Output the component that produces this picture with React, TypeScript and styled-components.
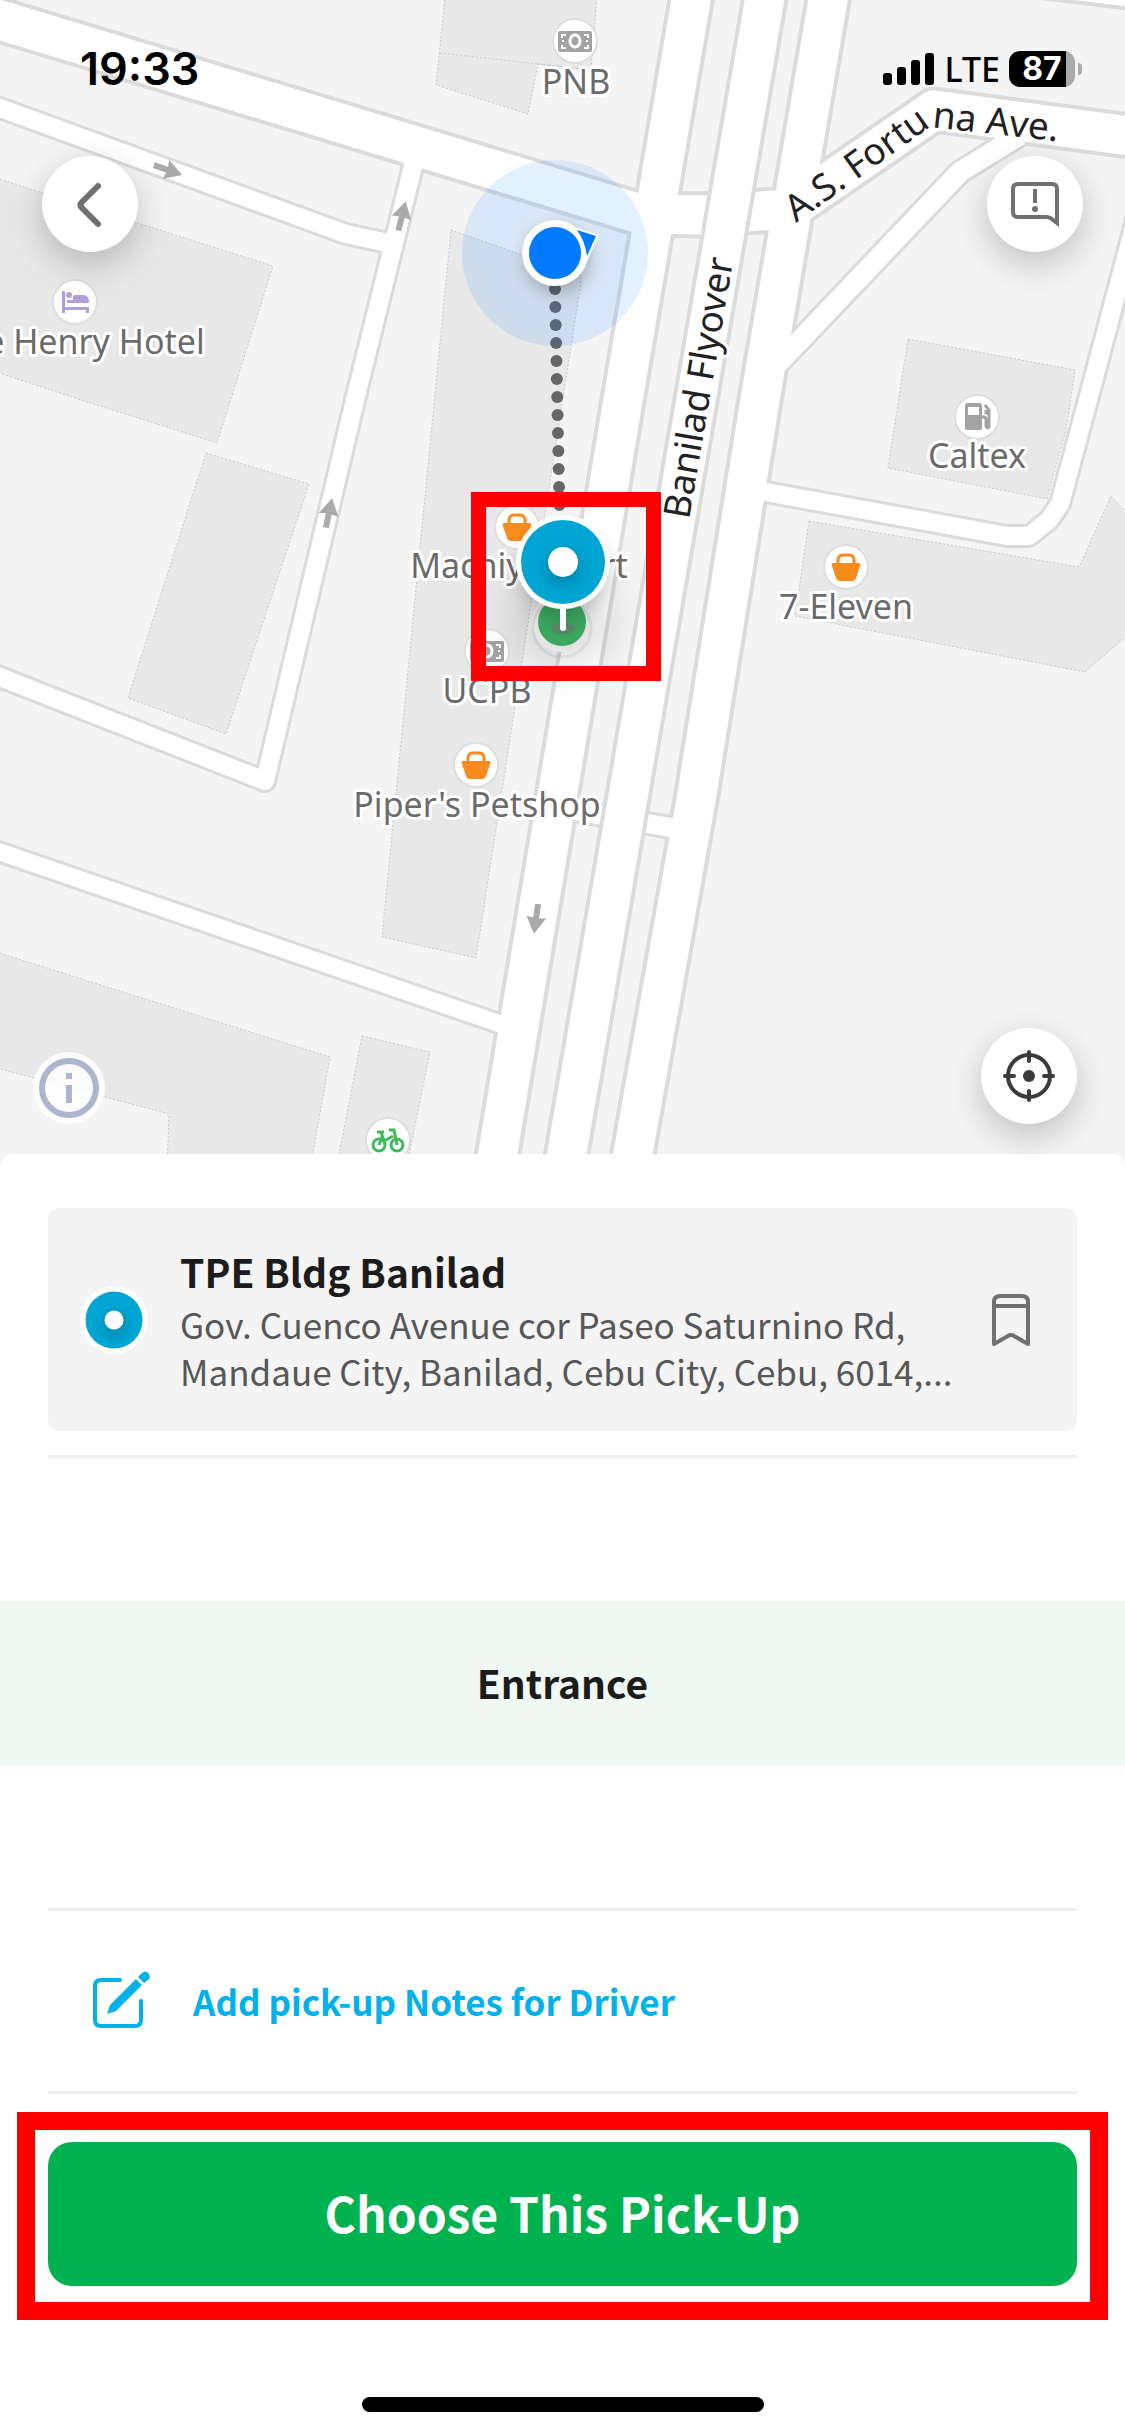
import React from 'react';
import styled, { createGlobalStyle } from 'styled-components';

const GlobalStyle = createGlobalStyle`
  *, *::before, *::after { box-sizing: border-box; }

  body {
    margin: 0;
    background: #fff;
    font-family: 'Noto Sans CJK SC', 'Noto Sans', sans-serif;
    color: #1c1c1c;
  }
`;

const Screen = styled.main`
  position: relative;
  width: 100%;
  min-height: 100vh;
  display: flex;
  flex-direction: column;
`;

const MapArea = styled.section`
  position: relative;
  height: 1168px;
  overflow: hidden;
  background: #f4f4f4;
`;

const MapSvg = styled.svg`
  display: block;
  width: 100%;
  height: 1168px;
`;

const MapOverlay = styled.div`
  position: absolute;
  inset: 0;
  display: flex;
  flex-direction: column;
  justify-content: space-between;
`;

const StatusBar = styled.header`
  display: flex;
  align-items: center;
  justify-content: space-between;
  height: 138px;
  padding: 0 43px 0 80px;
`;

const Clock = styled.time`
  font-family: Inter, 'Liberation Sans', sans-serif;
  font-size: 45px;
  font-weight: 600;
  line-height: 48px;
  color: #000;
`;

const StatusIcons = styled.div`
  display: flex;
  align-items: center;
  gap: 9px;
`;

const Network = styled.span`
  font-family: 'Noto Sans', sans-serif;
  font-size: 34px;
  font-weight: 500;
  line-height: 36px;
  color: #000;
`;

const ControlRow = styled.div`
  display: flex;
  align-items: flex-end;
  justify-content: space-between;
`;

const TopControls = styled(ControlRow)`
  padding: 18px 42px;
  margin-bottom: auto;
`;

const BottomControls = styled(ControlRow)`
  padding: 0 48px 44px 33px;
`;

const RoundButton = styled.button`
  display: flex;
  align-items: center;
  justify-content: center;
  width: 96px;
  height: 96px;
  padding: 0;
  border: 0;
  border-radius: 50%;
  background: #fff;
  box-shadow: 0 12px 36px rgba(0, 0, 0, 0.22);
`;

const InfoButton = styled(RoundButton)`
  width: 72px;
  height: 72px;
  background: rgba(255, 255, 255, 0.8);
  box-shadow: none;
`;

const PinHighlight = styled.div`
  position: absolute;
  left: 471px;
  top: 492px;
  width: 190px;
  height: 189px;
  border: 15px solid #f00;
`;

const Sheet = styled.section`
  position: relative;
  display: flex;
  flex-direction: column;
  margin-top: -14px;
  padding-top: 54px;
  border-radius: 14px 14px 0 0;
  background: #fff;
`;

const PlaceCard = styled.article`
  display: flex;
  align-items: center;
  margin: 0 48px;
  padding: 36px 47px 36px 32px;
  border-radius: 12px;
  background: #f4f4f4;
`;

const PlaceText = styled.div`
  flex: 1;
  min-width: 0;
  margin: -1px 0 1px 32px;
`;

const PlaceName = styled.h1`
  margin: 0;
  font-size: 39px;
  font-weight: 700;
  line-height: 57px;
`;

const PlaceAddress = styled.p`
  margin: 0;
  font-size: 35px;
  line-height: 47px;
  color: #575757;
`;

const SaveButton = styled.button`
  display: flex;
  padding: 0;
  border: 0;
  background: none;
`;

const Divider = styled.hr`
  width: calc(100% - 96px);
  height: 3px;
  margin: 0 48px;
  border: 0;
  background: #eee;
`;

const CardDivider = styled(Divider)`
  margin-top: 24px;
`;

const EntrancePicker = styled.div`
  display: flex;
  flex-direction: column;
  justify-content: center;
  height: 450px;
`;

const EntranceOption = styled.div`
  padding: 51px 0 54px;
  background: #eff8f3;
  font-size: 39px;
  font-weight: 700;
  line-height: 60px;
  text-align: center;
`;

const NotesButton = styled.button`
  display: flex;
  align-items: center;
  gap: 42px;
  height: 180px;
  margin: 0 48px;
  padding: 0 45px 2px;
  border: 0;
  background: none;
  color: #00b1eb;
  font-family: inherit;
  font-size: 35px;
  font-weight: 700;
`;

const ConfirmFrame = styled.div`
  margin: 18px 17px 0;
  padding: 12px 13px 16px;
  border: 18px solid #f00;
`;

const ConfirmButton = styled.button`
  width: 100%;
  height: 144px;
  padding: 0 0 4px;
  border: 0;
  border-radius: 24px;
  background: #00b14f;
  color: #fff;
  font-family: inherit;
  font-size: 48px;
  font-weight: 700;
`;

const HomeIndicator = styled.div`
  align-self: center;
  width: 402px;
  height: 15px;
  margin: 77px 0 24px;
  border-radius: 8px;
  background: #000;
`;

const PoiLabel = styled.text`
  font-family: 'Noto Sans', sans-serif;
  font-size: 34px;
  fill: #6b6b6b;
  stroke: #fff;
  stroke-width: 6px;
  stroke-linejoin: round;
  paint-order: stroke;
  text-anchor: middle;
`;

const StreetLabel = styled(PoiLabel)`
  font-size: 37px;
  fill: #222;
  text-anchor: start;
`;

interface Road {
  d: string;
  width: number;
  line?: number;
}

const roads: Road[] = [
  { d: 'M-20 14 L0 20 L640 214 L700 215 L790 209 L934 110 L1145 138', width: 43, line: 4 },
  { d: 'M980 -31 L1145 -11', width: 43, line: 4 },
  { d: 'M-20 101 L0 108 L346 234 L402 246', width: 21 },
  { d: 'M-20 669 L0 677 L265 781 L355 400 L417 150', width: 21 },
  { d: 'M-20 845 L0 852 L512 1028', width: 20 },
  { d: 'M755 490 L1007 536 L1029 536 L1049 520 L1060 504 L1088 400 L1140 205', width: 21 },
  { d: 'M765 377 L960 172 L1020 135', width: 23 },
  { d: 'M560 808 L690 831', width: 22 },
  { d: 'M694 -20 L691 0 L623 400 L495 1170', width: 43, line: 4 },
  { d: 'M832 -20 L828 0 L760 400 L696 800 L630 1170', width: 43, line: 4 },
];

const flyover: Road = { d: 'M768 -20 L564 1170', width: 43, line: 4 };

const buildings = [
  '445,-4 436,85 528,114 538,64 591,70 597,-4',
  '-4,178 273,266 217,443 81,400 -4,372',
  '206,453 309,484 226,734 128,698',
  '451,230 582,276 476,958 382,937',
  '-4,952 330,1057 310,1170 167,1170 169,1114 -4,1068',
  '362,1036 430,1052 406,1170 336,1170',
  '908,339 1075,370 1066,430 1047,499 888,468',
  '809,521 1079,567 1111,496 1129,516 1129,634 1085,672 795,616',
];

function RoadCasing({ d, width, line = 3 }: Road) {
  return <path d={d} stroke="#dbdbdb" strokeWidth={width + line} />;
}

function RoadFill({ d, width, line = 3 }: Road) {
  return <path d={d} stroke="#fff" strokeWidth={width - line} />;
}

interface MarkProps {
  x: number;
  y: number;
}

function DirectionArrow({ x, y, angle }: MarkProps & { angle: number }) {
  return (
    <path
      d="M0 -15 L10 2 L3 1 V15 H-3 V1 L-10 2 Z"
      fill="#aaa"
      transform={`translate(${x} ${y}) rotate(${angle})`}
    />
  );
}

function Poi({ x, y, children }: React.PropsWithChildren<MarkProps>) {
  return (
    <g transform={`translate(${x} ${y})`}>
      <circle r="22" fill="#fff" stroke="#dedede" strokeWidth="2" />
      {children}
    </g>
  );
}

const Basket = () => (
  <g>
    <path d="M-8 -4 V-8 Q-7 -12 -3 -12 H3 Q7 -12 8 -8 V-4" fill="none" stroke="#f98b1d" strokeWidth="3" />
    <path d="M-13 -4 H13 Q15 -4 14 -1 L10 11 Q9 14 6 14 H-6 Q-9 14 -10 11 L-14 -1 Q-15 -4 -13 -4 Z" fill="#f98b1d" />
  </g>
);

const Cash = () => (
  <g>
    <rect x="-17" y="-10" width="34" height="21" rx="2" fill="#a3a3a3" />
    <path d="M-9 -6 H-13 V-3 M-9 7 H-13 V4 M9 -6 H13 V-3 M9 7 H13 V4" fill="none" stroke="#fff" strokeWidth="2" />
    <path d="M-13 0 H-11 M11 0 H13" stroke="#fff" strokeWidth="2" />
    <ellipse rx="5" ry="6" fill="#a3a3a3" stroke="#fff" strokeWidth="3" />
  </g>
);

const Bed = () => (
  <g fill="#b39ddb">
    <path d="M-13 -11 H-10 V5 H14 V11 H11 V8 H-10 V11 H-13 Z" />
    <circle cx="-6" cy="-7" r="3" />
    <path d="M-8 1 V-2 H-2 V-5 Q-2 -7 0 -7 H8 Q14 -7 14 0 V1 Z" />
  </g>
);

const FuelPump = () => (
  <g>
    <path d="M-12 11 V-11 Q-12 -14 -9 -14 H2 Q5 -14 5 -11 V11 Q5 13 3 13 H-10 Q-12 13 -12 11 Z" fill="#a3a3a3" />
    <rect x="-9" y="-10" width="11" height="8" fill="#fff" />
    <path d="M5 0 H7 Q9 0 9 3 V9 Q10 12 12 10 V-7 L8 -12 M9 -7 V-4 H12" fill="none" stroke="#a3a3a3" strokeWidth="3" />
  </g>
);

const Bike = () => (
  <g fill="none" stroke="#3dbb5b" strokeWidth="3">
    <circle cx="-9" cy="5" r="6" />
    <circle cx="9" cy="5" r="6" />
    <path d="M-11 -8 H-4 M-7 -8 L-4 1 L5 -4 M-9 5 L-6 -3 M1 -10 H6 L9 5" />
  </g>
);

function StreetMap() {
  return (
    <MapSvg viewBox="0 0 1125 1168" preserveAspectRatio="xMidYMin slice" role="img" aria-label="Map">
      <defs>
        <filter id="soft" x="-100%" y="-100%" width="300%" height="300%">
          <feGaussianBlur stdDeviation="8" />
        </filter>
        <filter id="wide" x="-100%" y="-100%" width="300%" height="300%">
          <feGaussianBlur stdDeviation="24" />
        </filter>
        <path id="fortuna" d="M796 223 L930 127 L1100 146" />
        <path id="banilad" d="M689 520 L740 220" />
      </defs>

      <g fill="#e8e8e8" stroke="#c8c8c8" strokeDasharray="2 2">
        {buildings.map((points) => (
          <polygon key={points} points={points} />
        ))}
        <path d="M440 53 L591 70" />
      </g>

      <g fill="none" strokeLinejoin="round">
        {roads.map((road) => (
          <RoadCasing key={road.d} {...road} />
        ))}
        {roads.map((road) => (
          <RoadFill key={road.d} {...road} />
        ))}
        <RoadCasing {...flyover} />
        <RoadFill {...flyover} />
      </g>

      <DirectionArrow x={168} y={170} angle={109} />
      <DirectionArrow x={402} y={216} angle={14} />
      <DirectionArrow x={329} y={513} angle={12} />
      <DirectionArrow x={536} y={919} angle={188} />

      <StreetLabel>
        <textPath href="#banilad">Banilad Flyover</textPath>
      </StreetLabel>
      <StreetLabel>
        <textPath href="#fortuna">A.S. Fortuna Ave.</textPath>
      </StreetLabel>

      <Poi x={575} y={41}><Cash /></Poi>
      <PoiLabel x={576} y={94}>PNB</PoiLabel>
      <Poi x={75} y={302}><Bed /></Poi>
      <PoiLabel x={75} y={354}>The Henry Hotel</PoiLabel>
      <Poi x={977} y={417}><FuelPump /></Poi>
      <PoiLabel x={977} y={468}>Caltex</PoiLabel>
      <Poi x={846} y={567}><Basket /></Poi>
      <PoiLabel x={846} y={619}>7-Eleven</PoiLabel>
      <Poi x={517} y={527}><Basket /></Poi>
      <PoiLabel x={519} y={578}>Machiya Mart</PoiLabel>
      <Poi x={487} y={651}><Cash /></Poi>
      <PoiLabel x={487} y={703}>UCPB</PoiLabel>
      <Poi x={476} y={765}><Basket /></Poi>
      <PoiLabel x={477} y={817}>Piper's Petshop</PoiLabel>
      <Poi x={388} y={1140}><Bike /></Poi>

      {/* walking route */}
      {Array.from({ length: 13 }, (_, i) => (
        <circle key={i} cx={555 + i * 0.37} cy={289 + i * 18} r="6" fill="#666" />
      ))}

      {/* current location */}
      <circle cx="555" cy="253" r="93" fill="#007aff" opacity="0.11" />
      <circle cx="558" cy="260" r="34" opacity="0.2" filter="url(#soft)" />
      <path d="M573 228 L597 236 L585 262 Z" fill="#007aff" stroke="#fff" strokeWidth="3" />
      <circle cx="555" cy="253" r="33" fill="#fff" />
      <circle cx="555" cy="253" r="26" fill="#007aff" />
      <path d="M577 230 L596 236 L587 256 Q585 241 577 230 Z" fill="#007aff" />

      {/* pick-up pin */}
      <circle cx="562" cy="622" r="30" fill="#fff" />
      <circle cx="562" cy="622" r="24" fill="#43bd6b" />
      <circle cx="563" cy="618" r="46" opacity="0.16" filter="url(#wide)" />
      <circle cx="563" cy="572" r="46" opacity="0.15" filter="url(#soft)" />
      <circle cx="562" cy="628" r="29" fill="none" stroke="#000" strokeWidth="3" opacity="0.06" />
      <ellipse cx="563" cy="628" rx="12" ry="6" fill="#5b7d67" opacity="0.8" />
      <path d="M563 600 V628" stroke="#fff" strokeWidth="6" strokeLinecap="round" />
      <circle cx="563" cy="562" r="47" fill="#fff" />
      <circle cx="563" cy="562" r="42" fill="#00a5d4" />
      <circle cx="563" cy="568" r="17" opacity="0.2" filter="url(#soft)" />
      <circle cx="563" cy="562" r="15" fill="#fff" />
    </MapSvg>
  );
}

const SignalIcon = () => (
  <svg width="52" height="32" viewBox="0 0 52 32" aria-hidden="true">
    <rect x="0" y="20" width="9" height="12" rx="3" />
    <rect x="14" y="14" width="9" height="18" rx="3" />
    <rect x="28" y="7" width="9" height="25" rx="3" />
    <rect x="42" y="0" width="9" height="32" rx="3" />
  </svg>
);

const Battery = styled.div`
  display: flex;
  align-items: center;
  gap: 3px;

  &::after {
    content: '';
    width: 4px;
    height: 12px;
    border-radius: 0 4px 4px 0;
    background: #aaa;
  }
`;

const BatteryBody = styled.span<{ $level: number }>`
  width: 66px;
  height: 36px;
  border-radius: 11px;
  background: linear-gradient(to right, #000 ${({ $level }) => $level}%, #aaa ${({ $level }) => $level}%);
  color: #fff;
  font-family: Inter, 'Liberation Sans', sans-serif;
  font-size: 32px;
  font-weight: 700;
  line-height: 36px;
  text-align: center;
`;

const BackIcon = () => (
  <svg width="96" height="96" viewBox="0 0 96 96" aria-hidden="true">
    <path
      d="M56 30 L40 46 Q37 49 40 52 L56 68"
      fill="none"
      stroke="#707070"
      strokeWidth="6"
      strokeLinecap="round"
      strokeLinejoin="round"
    />
  </svg>
);

const ReportIcon = () => (
  <svg width="96" height="96" viewBox="0 0 96 96" fill="none" stroke="#707070" strokeWidth="4" aria-hidden="true">
    <path d="M70 67 V33 Q70 28 65 28 H31 Q26 28 26 33 V56 Q26 61 31 61 H59 Q63 61 66 64 Z" />
    <path d="M48 33 V47" />
    <circle cx="48" cy="53" r="3" fill="#707070" stroke="none" />
  </svg>
);

const LocateIcon = () => (
  <svg width="96" height="96" viewBox="0 0 96 96" aria-hidden="true">
    <circle cx="48" cy="48" r="21" fill="none" stroke="#3b3b3b" strokeWidth="4" />
    <circle cx="48" cy="48" r="6" fill="#3b3b3b" />
    <path d="M48 24 V33 M48 63 V72 M24 48 H33 M63 48 H72" stroke="#3b3b3b" strokeWidth="4" strokeLinecap="round" />
  </svg>
);

const InfoIcon = () => (
  <svg width="72" height="72" viewBox="0 0 72 72" aria-hidden="true">
    <circle cx="36" cy="36" r="27" fill="none" stroke="#abb6cc" strokeWidth="6" />
    <path d="M33 21 H39 V27 H33 Z M33 33 H39 V51 H33 Z" fill="#abb6cc" />
  </svg>
);

const PlaceIcon = () => (
  <svg width="68" height="68" viewBox="0 0 68 68" aria-hidden="true">
    <defs>
      <radialGradient id="placeShade" cx="34" cy="39" r="20" gradientUnits="userSpaceOnUse">
        <stop offset="0.4" stopColor="#0095c1" />
        <stop offset="1" stopColor="#00a5d4" />
      </radialGradient>
    </defs>
    <circle cx="34" cy="34" r="34" fill="#fff" />
    <circle cx="34" cy="34" r="28.5" fill="url(#placeShade)" />
    <circle cx="34" cy="34" r="9.5" fill="#fff" />
  </svg>
);

const BookmarkIcon = () => (
  <svg width="38" height="52" viewBox="0 0 38 52" fill="none" stroke="#707070" strokeWidth="4" aria-hidden="true">
    <path d="M2 50 V8 Q2 2 8 2 H30 Q36 2 36 8 V50 L22 42 Q19 40 16 42 Z" strokeLinejoin="round" />
    <path d="M2 12 H36" />
  </svg>
);

const NoteIcon = () => (
  <svg width="58" height="58" viewBox="0 0 58 58" aria-hidden="true">
    <path
      d="M27 9 H8 Q2 9 2 15 V49 Q2 55 8 55 H42 Q48 55 48 49 V30"
      fill="none"
      stroke="#00b1eb"
      strokeWidth="4"
      strokeLinecap="round"
    />
    <path d="M43 8 L49 14 L23 40 L14 43 L17 34 Z M45 6 L49 2 Q52 -1 55 2 Q58 5 56 8 L51 12 Z" fill="#00b1eb" />
  </svg>
);

export default function App() {
  return (
    <>
      <GlobalStyle />
      <Screen>
        <MapArea>
          <StreetMap />
          <PinHighlight />
          <MapOverlay>
            <StatusBar>
              <Clock>19:33</Clock>
              <StatusIcons>
                <SignalIcon />
                <Network>LTE</Network>
                <Battery>
                  <BatteryBody $level={87}>87</BatteryBody>
                </Battery>
              </StatusIcons>
            </StatusBar>
            <TopControls>
              <RoundButton aria-label="Back">
                <BackIcon />
              </RoundButton>
              <RoundButton aria-label="Report a problem">
                <ReportIcon />
              </RoundButton>
            </TopControls>
            <BottomControls>
              <InfoButton aria-label="Map information">
                <InfoIcon />
              </InfoButton>
              <RoundButton aria-label="Locate me">
                <LocateIcon />
              </RoundButton>
            </BottomControls>
          </MapOverlay>
        </MapArea>

        <Sheet>
          <PlaceCard>
            <PlaceIcon />
            <PlaceText>
              <PlaceName>TPE Bldg Banilad</PlaceName>
              <PlaceAddress>
                Gov. Cuenco Avenue cor Paseo Saturnino Rd,
                <br />
                Mandaue City, Banilad, Cebu City, Cebu, 6014,...
              </PlaceAddress>
            </PlaceText>
            <SaveButton aria-label="Save place">
              <BookmarkIcon />
            </SaveButton>
          </PlaceCard>
          <CardDivider />
          <EntrancePicker>
            <EntranceOption>Entrance</EntranceOption>
          </EntrancePicker>
          <Divider />
          <NotesButton>
            <NoteIcon />
            Add pick-up Notes for Driver
          </NotesButton>
          <Divider />
          <ConfirmFrame>
            <ConfirmButton>Choose This Pick-Up</ConfirmButton>
          </ConfirmFrame>
          <HomeIndicator />
        </Sheet>
      </Screen>
    </>
  );
}
